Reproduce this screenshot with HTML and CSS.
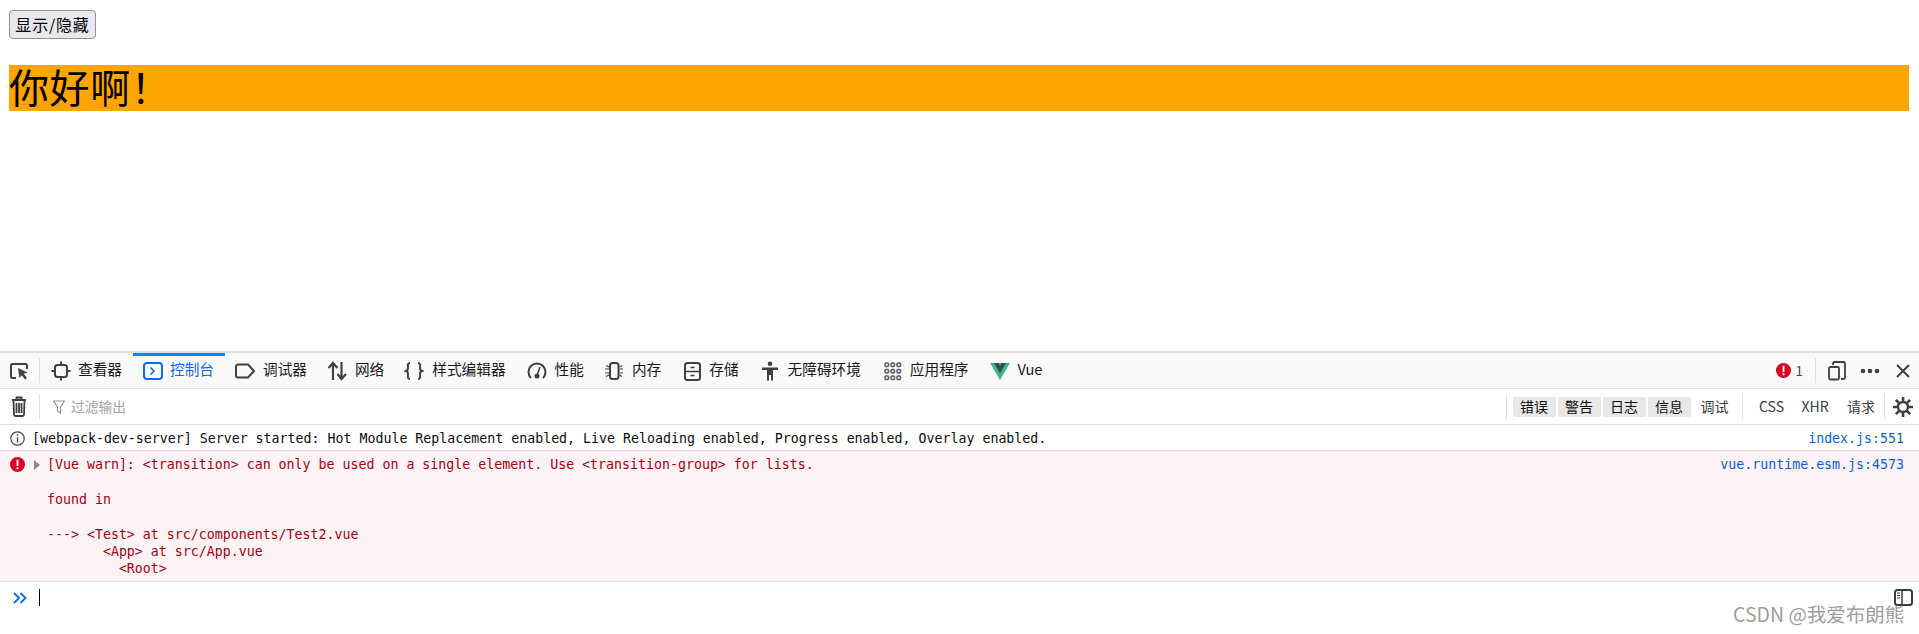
FILE: index.html
```html
<!DOCTYPE html>
<html lang="zh">
<head>
<meta charset="utf-8">
<title>Console</title>
<link rel="stylesheet" href="styles.css">
</head>
<body>
<main class="page">
  <button class="toggle">显示/隐藏</button>
  <div class="hello">你好啊！</div>
</main>
<section class="devtools">
  <nav class="tabs">
    <span class="picker"><svg width="20" height="20" viewBox="0 0 20 20" class="ic"><path d="M7 17H3.500A1.500 1.500 0 0 1 2 15.500V4.500A1.500 1.500 0 0 1 3.500 3h13A1.500 1.500 0 0 1 18 4.500V8" fill="none" stroke="currentColor" stroke-width="2"/><path d="M9 7l9.500 4.500-3.800 1.200 3.300 4.300-2 1.500-3.200-4.300L10.500 17z" fill="currentColor"/></svg></span>
    <i class="vsep"></i>
    <a class="tab tight"><svg width="20" height="20" viewBox="0 0 20 20" class="ic"><rect x="4" y="4" width="12" height="12" rx="2.500" fill="none" stroke="currentColor" stroke-width="2"/><path d="M10 0.500v3.500M10 16v3.500M0.500 10H4M16 10h3.500" stroke="currentColor" stroke-width="2"/></svg>查看器</a>
    <a class="tab tight active"><svg width="20" height="20" viewBox="0 0 20 20"><rect x="1" y="2" width="18" height="16" rx="3" fill="none" stroke="currentColor" stroke-width="2"/><path d="M7.500 6.500L11 10l-3.500 3.500" fill="none" stroke="currentColor" stroke-width="1.600"/></svg>控制台</a>
    <a class="tab"><svg width="20" height="20" viewBox="0 0 20 20" class="ic"><path d="M3 3.500h10L19 10l-6 6.500H3a2 2 0 0 1-2-2v-9a2 2 0 0 1 2-2z" fill="none" stroke="currentColor" stroke-width="2"/></svg>调试器</a>
    <a class="tab"><svg width="20" height="20" viewBox="0 0 20 20" class="ic"><path d="M6 19V2M1.500 7L6 2l4.500 5M14.500 1v17M10.500 13l4 5 4.500-5" fill="none" stroke="currentColor" stroke-width="2.200"/></svg>网络</a>
    <a class="tab"><svg width="20" height="20" viewBox="0 0 20 20" class="ic"><path d="M6 2C3 2 4 5 4 7S3.500 9.500 2 10c1.500.5 2 1 2 3s-1 5 2 5M14 2c3 0 2 3 2 5s.5 2.500 2 3c-1.500.5-2 1-2 3s1 5-2 5" fill="none" stroke="currentColor" stroke-width="2"/></svg>样式编辑器</a>
    <a class="tab nudge"><svg width="20" height="20" viewBox="0 0 20 20" class="ic"><path d="M4 17A8.500 8.500 0 1 1 16 17" fill="none" stroke="currentColor" stroke-width="2"/><path d="M13 6L10.500 13" stroke="currentColor" stroke-width="1.500"/><circle cx="10" cy="15" r="2.500" fill="currentColor"/></svg>性能</a>
    <a class="tab"><svg width="20" height="20" viewBox="0 0 20 20" class="ic"><rect x="6" y="2" width="8.500" height="16" rx="2.500" fill="none" stroke="currentColor" stroke-width="2"/><path d="M2 4.500l3 1.500M1 8h4M1 12h4M2 15.500l3-1.500M18 4.500L15.500 6M19 8h-3.500M19 12h-3.500M18 15.500L15.500 14" stroke="currentColor" stroke-width="1.200"/></svg>内存</a>
    <a class="tab"><svg width="20" height="20" viewBox="0 0 20 20" class="ic"><rect x="4" y="2" width="15" height="17" rx="2.500" fill="none" stroke="currentColor" stroke-width="2"/><path d="M4 10.500h15M9.500 6.500h4M9.500 14.500h4" stroke="currentColor" stroke-width="1.500"/></svg>存储</a>
    <a class="tab nudge"><svg width="20" height="20" viewBox="0 0 20 20" class="ic"><circle cx="10" cy="2.800" r="2.300" fill="currentColor"/><path d="M2 6.500h16v2.500h-5v10.500h-2V14H9v5.500H7V9H2z" fill="currentColor"/></svg>无障碍环境</a>
    <a class="tab nudge"><svg width="20" height="20" viewBox="0 0 20 20" class="grid"><g fill="none" stroke="currentColor" stroke-width="1.500"><rect x="3" y="2" width="3.500" height="3.500" rx="1"/><rect x="9" y="2" width="3.500" height="3.500" rx="1"/><rect x="15" y="2" width="3.500" height="3.500" rx="1"/><rect x="3" y="8.500" width="3.500" height="3.500" rx="1"/><rect x="9" y="8.500" width="3.500" height="3.500" rx="1"/><rect x="15" y="8.500" width="3.500" height="3.500" rx="1"/><rect x="3" y="15" width="3.500" height="3.500" rx="1"/><rect x="9" y="15" width="3.500" height="3.500" rx="1"/><rect x="15" y="15" width="3.500" height="3.500" rx="1"/></g></svg>应用程序</a>
    <a class="tab nudge"><svg width="20" height="20" viewBox="0 0 20 20"><path d="M0 2h20L10 19z" fill="#41b883"/><path d="M4 2h4.500L10 5l1.500-3H16l-6 10.500z" fill="#34495e"/></svg>Vue</a>
    <span class="grow"></span>
    <span class="errcount"><svg width="15" height="15" viewBox="0 0 16 16"><circle cx="8" cy="8" r="8" fill="#d70022"/><path d="M7 3h2v6.500H7zM7 11h2v2H7z" fill="#fff"/></svg>1</span>
    <i class="vsep"></i>
    <span class="tool-r resp"><svg width="20" height="20" viewBox="0 0 20 20" class="ic"><path d="M6 4V2.500A1.500 1.500 0 0 1 7.500 1h9A1.500 1.500 0 0 1 18 2.500v14a1.500 1.500 0 0 1-1.500 1.500H14" fill="none" stroke="currentColor" stroke-width="1.800"/><rect x="2" y="6" width="10" height="12.500" rx="1.500" fill="none" stroke="currentColor" stroke-width="1.800"/></svg></span>
    <span class="tool-r dots"><svg width="20" height="6" viewBox="0 0 20 6" class="ic"><circle cx="3" cy="3" r="2.300" fill="currentColor"/><circle cx="10" cy="3" r="2.300" fill="currentColor"/><circle cx="17" cy="3" r="2.300" fill="currentColor"/></svg></span>
    <span class="tool-r close"><svg width="14" height="14" viewBox="0 0 14 14" class="ic"><path d="M1 1l12 12M13 1L1 13" stroke="currentColor" stroke-width="2"/></svg></span>
  </nav>
  <div class="filterbar">
    <span class="trash"><svg width="16" height="21" viewBox="0 0 16 21" class="ic"><path d="M1 4h14M5.500 3.500V1.500h5v2M2.500 4l.5 14.500a1.500 1.500 0 0 0 1.500 1.500h7a1.500 1.500 0 0 0 1.500-1.500L13.500 4M5.500 7v10M8 7v10M10.500 7v10" fill="none" stroke="currentColor" stroke-width="1.800"/></svg></span>
    <i class="vsep"></i>
    <svg class="funnel" width="12" height="14" viewBox="0 0 12 14"><path d="M.5 1h11L7.500 7v6L4.500 11V7z" fill="none" stroke="#8f8f8f" stroke-width="1.100"/></svg>
    <span class="filtertext">过滤输出</span>
    <span class="grow"></span>
    <i class="vsep first"></i>
    <span class="pill on">错误</span>
    <span class="pill on">警告</span>
    <span class="pill on">日志</span>
    <span class="pill on">信息</span>
    <span class="pill debug">调试</span>
    <i class="vsep"></i>
    <span class="net css">CSS</span>
    <span class="net xhr">XHR</span>
    <span class="net">请求</span>
    <i class="vsep sep3"></i>
    <span class="gear"><svg width="20" height="20" viewBox="0 0 20 20" class="ic"><circle cx="10" cy="10" r="5" fill="none" stroke="currentColor" stroke-width="2.400"/><path d="M10 0v5M10 15v5M0 10h5M15 10h5M2.900 2.900l3.600 3.600M13.500 13.500l3.600 3.600M17.100 2.900l-3.600 3.600M6.500 13.500l-3.600 3.600" stroke="currentColor" stroke-width="2.600"/></svg></span>
  </div>
  <div class="log">
    <div class="msg info">
      <svg class="msgicon" width="15" height="15" viewBox="0 0 15 15"><circle cx="7.500" cy="7.500" r="6.700" fill="none" stroke="#4a4a4f" stroke-width="1.200"/><path d="M6.800 3.300h1.400v1.500H6.800zM6.800 6.300h1.400v5.200H6.800z" fill="#4a4a4f"/></svg>
      <pre class="msgtext">[webpack-dev-server] Server started: Hot Module Replacement enabled, Live Reloading enabled, Progress enabled, Overlay enabled.</pre>
      <a class="src">index.js:551</a>
    </div>
    <div class="msg error">
      <svg class="msgicon" width="15" height="15" viewBox="0 0 16 16"><circle cx="8" cy="8" r="8" fill="#d70022"/><path d="M7 3h2v6.500H7zM7 11h2v2H7z" fill="#fff"/></svg>
      <svg class="arrow" width="6" height="10" viewBox="0 0 6 10"><path d="M0 0l6 5-6 5z" fill="#8a8a8a"/></svg>
      <pre class="msgtext">[Vue warn]: &lt;transition&gt; can only be used on a single element. Use &lt;transition-group&gt; for lists.

found in

---&gt; &lt;Test&gt; at src/components/Test2.vue
       &lt;App&gt; at src/App.vue
         &lt;Root&gt;</pre>
      <a class="src">vue.runtime.esm.js:4573</a>
    </div>
  </div>
  <div class="prompt">
    <svg class="chev" width="14" height="12" viewBox="0 0 14 12"><path d="M1 1l5 5-5 5M7.500 1l5 5-5 5" fill="none" stroke="#0a6ce0" stroke-width="1.800"/></svg>
    <i class="caret"></i>
    <span class="grow"></span>
    <svg class="sidebar" width="19" height="17" viewBox="0 0 19 17"><rect x="1" y="1" width="17" height="15" rx="2.500" fill="none" stroke="#3b3b3b" stroke-width="2"/><path d="M8 1v15" stroke="#3b3b3b" stroke-width="1.500"/><path d="M3 4h3M3 6.500h3M3 9h3" stroke="#3b3b3b"/></svg>
  </div>
</section>
<div class="watermark">CSDN @我爱布朗熊</div>
</body>
</html>
```

FILE: styles.css
```css
* { box-sizing: border-box; }
html, body { margin: 0; height: 634px; overflow: hidden; background: #fff; }
body { display: flex; flex-direction: column; font-family: "Noto Sans CJK SC", "Liberation Sans", sans-serif; color: #0c0c0d; }
.page { height: 351px; flex: none; padding: 10px 10px 0 9px; }
.toggle { display: block; width: 87px; height: 29px; padding: 0 0 2px; border: 1.500px solid #8f8f9d; border-radius: 4px; background: #e9e9ed; color: #000; font: 16px/1 "Noto Sans CJK SC", sans-serif; letter-spacing: 0.800px; }
.hello { margin-top: 26px; height: 46px; background: #ffa500; color: #000; font: 400 40px/42px "Noto Sans CJK SC", serif; letter-spacing: 0.600px; }
.devtools { flex: 1; display: flex; flex-direction: column; border-top: 2px solid #e0e0e2; min-height: 0; }
.ic { color: #3f3f44; }
.grow { flex: 1; }
.vsep { flex: none; width: 1px; height: 25px; background: #e0e0e2; }
.tabs { flex: none; height: 36px; display: flex; align-items: center; background: #f9f9fa; border-bottom: 1.500px solid #e0e0e2; font-size: 14.670px; line-height: 20px; }
.picker { display: flex; width: 39px; padding-left: 9px; }
.tab { height: 100%; display: flex; align-items: center; gap: 8px; padding: 0 10px 6px; white-space: nowrap; color: #18181a; border-top: 3px solid transparent; }
.tab svg { margin-top: 3px; }
.tab.tight { gap: 7px; padding-right: 11px; }
.tab.tight:first-of-type { margin-left: 1px; }
.tab.active { color: #0a6ce0; border-top-color: #0a84ff; }
.nudge { margin-left: 1px; }
.grid { color: #5a5a5f; }
.errcount { display: flex; align-items: center; gap: 5px; font-size: 13.330px; color: #4a4a4f; margin-right: 12px; }
.tool-r { display: flex; align-items: center; }
.resp { margin-left: 11px; }
.dots { margin-left: 13px; }
.close { margin-left: 16px; margin-right: 9px; }
.filterbar { flex: none; height: 36px; display: flex; align-items: center; border-bottom: 1.500px solid #e0e0e2; font-size: 13.330px; color: #2f2f33; }
.trash { display: flex; padding-left: 11px; width: 39px; }
.funnel { margin-left: 13px; }
.filtertext { margin: 0 0 2px 6px; color: #a3a3a8; font-size: 13.750px; }
.first { margin-right: 6px; }
.pill { height: 20px; line-height: 18px; margin-right: 2px; border-radius: 2px; font-size: 14px; text-align: center; width: 43px; }
.pill.on { background: #e8e8e8; color: #0c0c0d; }
.debug { margin-left: 7px; width: 30px; margin-right: 12px; color: #3a3a3e; }
.net { font-size: 14px; color: #3a3a3e; margin: 0 0 2px 18px; width: 28px; text-align: center; white-space: nowrap; }
.css { margin-left: 15px; }
.xhr { margin-left: 15.500px; }
.sep3 { margin-left: 9px; }
.gear { display: flex; margin-left: 8px; margin-right: 6px; }
.log { flex: none; font: 13.280px/17.400px "DejaVu Sans Mono", monospace; }
.msg { display: flex; align-items: flex-start; }
.msgtext { margin: 0; font: inherit; white-space: pre; flex: 1; }
.msgicon { flex: none; margin-left: 10px; margin-top: 1px; }
.info { height: 25.500px; padding-top: 5px; border-bottom: 1px solid #fcd0d4; }
.info .msgtext { margin-left: 7px; color: #0c0c0d; }
.error { height: 131px; padding-top: 5.500px; background: #fdf2f5; color: #a4000f; border-bottom: 1.500px solid #e0e0e2; }
.arrow { flex: none; margin: 4px 0 0 9px; }
.error .msgtext { margin-left: 7px; }
.src { flex: none; margin-right: 15px; color: #0a5fd0; }
.prompt { flex: 1; display: flex; align-items: flex-start; padding-top: 7px; }
.chev { flex: none; margin: 3px 0 0 13px; }
.caret { flex: none; width: 1px; height: 17px; margin-left: 12px; background: #000; }
.sidebar { flex: none; margin-right: 6px; }
.watermark { position: absolute; left: 1733px; top: 601px; font-size: 19.500px; line-height: 26px; color: rgba(90, 90, 90, 0.62); white-space: nowrap; }
```
